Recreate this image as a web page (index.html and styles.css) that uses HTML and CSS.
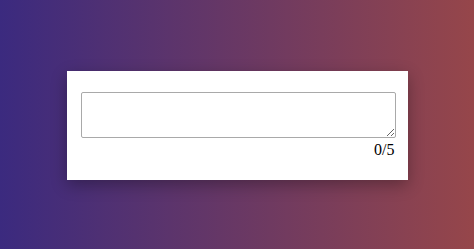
FILE: index.html
```html
<!DOCTYPE html>
<html lang="en">

<head>
    <meta charset="UTF-8">
    <meta name="viewport" content="width=device-width, initial-scale=1.0">
    <title>Character Counter</title>
    <link rel="stylesheet" href="styles.css">
</head>

<body>
    <div class="card">
        <textarea class="text-input" maxlength="5"></textarea>
        <div class="counter">0/5</div>
    </div>
</body>

</html>
```

FILE: styles.css
```css
body {
    margin: 0;
    height: 100vh;
    display: flex;
    align-items: center;
    justify-content: center;
    background: linear-gradient(to right, #3b2a7f, #96464a);
    font-family: "Liberation Serif", serif;
}

/* White box holding the textarea */
.card {
    width: 341px;
    box-sizing: border-box;
    padding: 21px 12px 21px 14px;
    margin-top: 2px;
    background-color: #fff;
    box-shadow: 0 5px 15px rgba(0, 0, 0, 0.3);
}

.text-input {
    display: block;
    width: 315px;
    height: 46px;
    box-sizing: border-box;
    margin: 0;
    border: 1px solid #a9a9a9;
    border-radius: 2px;
    resize: vertical;
}

.counter {
    text-align: right;
    font-family: "Liberation Serif", serif;
    font-size: 16px;
    line-height: 18px;
    margin-top: 3px;
    margin-right: 1px;
    color: #000;
}
```
